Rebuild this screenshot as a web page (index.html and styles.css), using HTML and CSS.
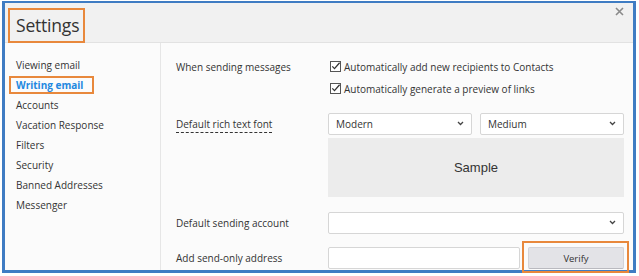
FILE: index.html
```html
<!DOCTYPE html>
<html>
<head>
<meta charset="utf-8">
<link rel="stylesheet" href="styles.css">
</head>
<body>
<div class="frame">
  <div class="header">
    <div class="title mark">Settings</div>
    <svg class="close" width="9" height="9" viewBox="0 0 9 9"><path d="M1 1L8 8M8 1L1 8" stroke="#8a8a8a" stroke-width="1.6"/></svg>
  </div>
  <div class="body">
    <nav class="sidebar">
      <div class="nav-item">Viewing email</div>
      <div class="nav-item"><span class="active mark">Writing email</span></div>
      <div class="nav-item">Accounts</div>
      <div class="nav-item">Vacation Response</div>
      <div class="nav-item">Filters</div>
      <div class="nav-item">Security</div>
      <div class="nav-item">Banned Addresses</div>
      <div class="nav-item">Messenger</div>
    </nav>
    <main class="main">
      <div class="row row-send">
        <div class="label">When sending messages</div>
        <div class="control checks">
          <div class="check"><svg width="11" height="11" viewBox="0 0 11 11"><rect x="0.5" y="0.5" width="10" height="10" fill="#fff" stroke="#555"/><path d="M2.3 5.4L4.5 7.6L9.6 1.8" fill="none" stroke="#333" stroke-width="1.3"/></svg><span>Automatically add new recipients to Contacts</span></div>
          <div class="check"><svg width="11" height="11" viewBox="0 0 11 11"><rect x="0.5" y="0.5" width="10" height="10" fill="#fff" stroke="#555"/><path d="M2.3 5.4L4.5 7.6L9.6 1.8" fill="none" stroke="#333" stroke-width="1.3"/></svg><span>Automatically generate a preview of links</span></div>
        </div>
      </div>
      <div class="row row-font">
        <div class="label"><span class="dashed">Default rich text font</span></div>
        <div class="control">
          <div class="selects">
            <div class="select"><span>Modern</span><svg class="chev" width="7" height="5" viewBox="0 0 7 5"><path d="M1 1L3.5 3.5L6 1" fill="none" stroke="#444" stroke-width="1.3"/></svg></div>
            <div class="select"><span>Medium</span><svg class="chev" width="7" height="5" viewBox="0 0 7 5"><path d="M1 1L3.5 3.5L6 1" fill="none" stroke="#444" stroke-width="1.3"/></svg></div>
          </div>
          <div class="sample">Sample</div>
        </div>
      </div>
      <div class="row row-account">
        <div class="label">Default sending account</div>
        <div class="control">
          <div class="select"><span></span><svg class="chev" width="7" height="5" viewBox="0 0 7 5"><path d="M1 1L3.5 3.5L6 1" fill="none" stroke="#444" stroke-width="1.3"/></svg></div>
        </div>
      </div>
      <div class="row row-address">
        <div class="label">Add send-only address</div>
        <div class="control inline">
          <div class="input"></div>
          <div class="verify mark">Verify</div>
        </div>
      </div>
    </main>
  </div>
</div>
</body>
</html>
```
FILE: styles.css
```css
* { box-sizing: border-box; }
html, body { margin: 0; padding: 0; background: #ffffff; }
body {
  font-family: "Open Sans", "Noto Sans", sans-serif;
  font-size: 10px;
  color: #333;
}
.frame {
  margin: 1px 3px 3px 2px;
  height: 272px;
  border: 3px solid #3f7cc3;
  border-top-width: 2px;
  background: #fbfbfb;
  display: flex;
  flex-direction: column;
}
.header {
  height: 40px;
  flex: none;
  background: #f1f1f1;
  border-bottom: 1px solid #e2e2e2;
  display: flex;
  align-items: flex-start;
  justify-content: space-between;
  padding: 5px 9px 0 3px;
}
.mark { position: relative; }
.mark::after {
  content: "";
  position: absolute;
  border: 2px solid #e8883c;
  pointer-events: none;
}
.title {
  font-size: 17.5px;
  letter-spacing: -0.2px;
  color: #333;
  line-height: 34px;
  height: 34px;
  padding: 0 6px 0 8px;
}
.title::after { inset: 0 0 -1px 0; }
.close { margin-top: -1px; }
.body {
  flex: 1;
  display: flex;
}
.sidebar {
  width: 156px;
  flex: none;
  border-right: 1px solid #e6e6e6;
  padding: 12px 0 0 11px;
}
.nav-item {
  line-height: 20px;
  height: 20px;
  white-space: nowrap;
}
.active {
  color: #2288e0;
  font-weight: bold;
}
.active::after { inset: -2px -11px -2px -7px; }
.main {
  flex: 1;
  padding: 13px 9px 0 15px;
}
.row { display: flex; }
.label {
  width: 152px;
  flex: none;
  line-height: 22px;
}
.control { width: 296px; flex: none; }
.checks { padding-left: 2px; }
.check {
  height: 22px;
  display: flex;
  align-items: center;
  gap: 3px;
}
.check svg { flex: none; margin-top: -2px; }
.row-font { margin-top: 13px; }
.dashed {
  border-bottom: 1px dashed #333;
  padding-bottom: 1px;
}
.selects { display: flex; gap: 8px; }
.selects .select { flex: 1; }
.select {
  height: 22px;
  background: #fff;
  border: 1px solid #d6d6d6;
  border-radius: 2px;
  display: flex;
  align-items: center;
  justify-content: space-between;
  padding: 0 7px 0 7px;
}
.chev { flex: none; margin-top: -2px; }
.sample {
  margin-top: 3px;
  height: 59px;
  background: #ececec;
  font-family: "Liberation Sans", Arial, sans-serif;
  font-size: 13px;
  display: flex;
  align-items: center;
  justify-content: center;
}
.row-account { margin-top: 15px; }
.row-address { margin-top: 13px; }
.inline { display: flex; gap: 8px; }
.input {
  width: 192px;
  height: 22px;
  background: #fff;
  border: 1px solid #d6d6d6;
  border-radius: 2px;
}
.verify {
  flex: 1;
  height: 22px;
  background: #e3e3e7;
  border: 1px solid #d3d3d8;
  border-bottom-color: #b9b9bf;
  border-radius: 2px;
  font-size: 9.5px;
  display: flex;
  align-items: center;
  justify-content: center;
}
.verify::after { inset: -7px -6px -5px -7px; }
```
